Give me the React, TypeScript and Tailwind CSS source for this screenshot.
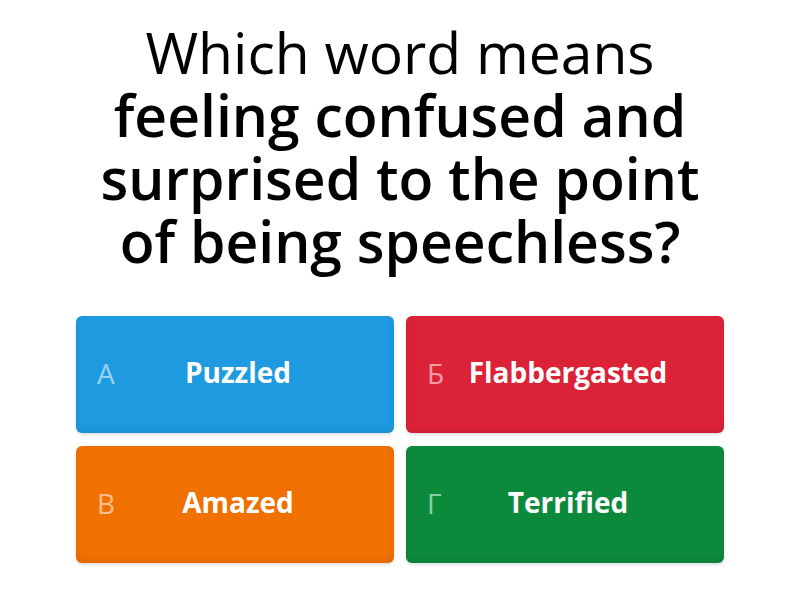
import React from "react";

const answers = [
  { letter: "A", text: "Puzzled", bg: "bg-[#1d9ae0]" },
  { letter: "Б", text: "Flabbergasted", bg: "bg-[#dc2237]" },
  { letter: "В", text: "Amazed", bg: "bg-[#f07000]" },
  { letter: "Г", text: "Terrified", bg: "bg-[#0c8a3c]" },
];

export default function App() {
  return (
    <div
      className="w-[800px] h-[600px] bg-white flex flex-col items-center"
      style={{ fontFamily: '"Open Sans", "Noto Sans", sans-serif' }}
    >
      <h1 className="mt-[21px] w-[660px] text-center text-[57px] leading-[63px] text-black">
        <span className="font-normal">Which word means</span>
        <br />
        <span className="font-semibold">
          feeling confused and surprised to the point of being speechless?
        </span>
      </h1>
      <div className="mt-[43px] grid grid-cols-[318px_318px] gap-x-[12px] gap-y-[13px]">
        {answers.map((a) => (
          <div
            key={a.letter}
            className={`${a.bg} relative h-[117px] pb-[6px] rounded-[6px] flex items-center justify-center shadow-[inset_0_-3px_6px_rgba(0,0,0,0.08),0_2px_3px_rgba(0,0,0,0.12)]`}
          >
            <span className="absolute left-[21px] top-[38px] text-[28px] leading-[38px] text-white/55 font-normal">
              {a.letter}
            </span>
            <span className="pl-[6px] text-[28px] leading-[38px] font-bold text-white">{a.text}</span>
          </div>
        ))}
      </div>
    </div>
  );
}
